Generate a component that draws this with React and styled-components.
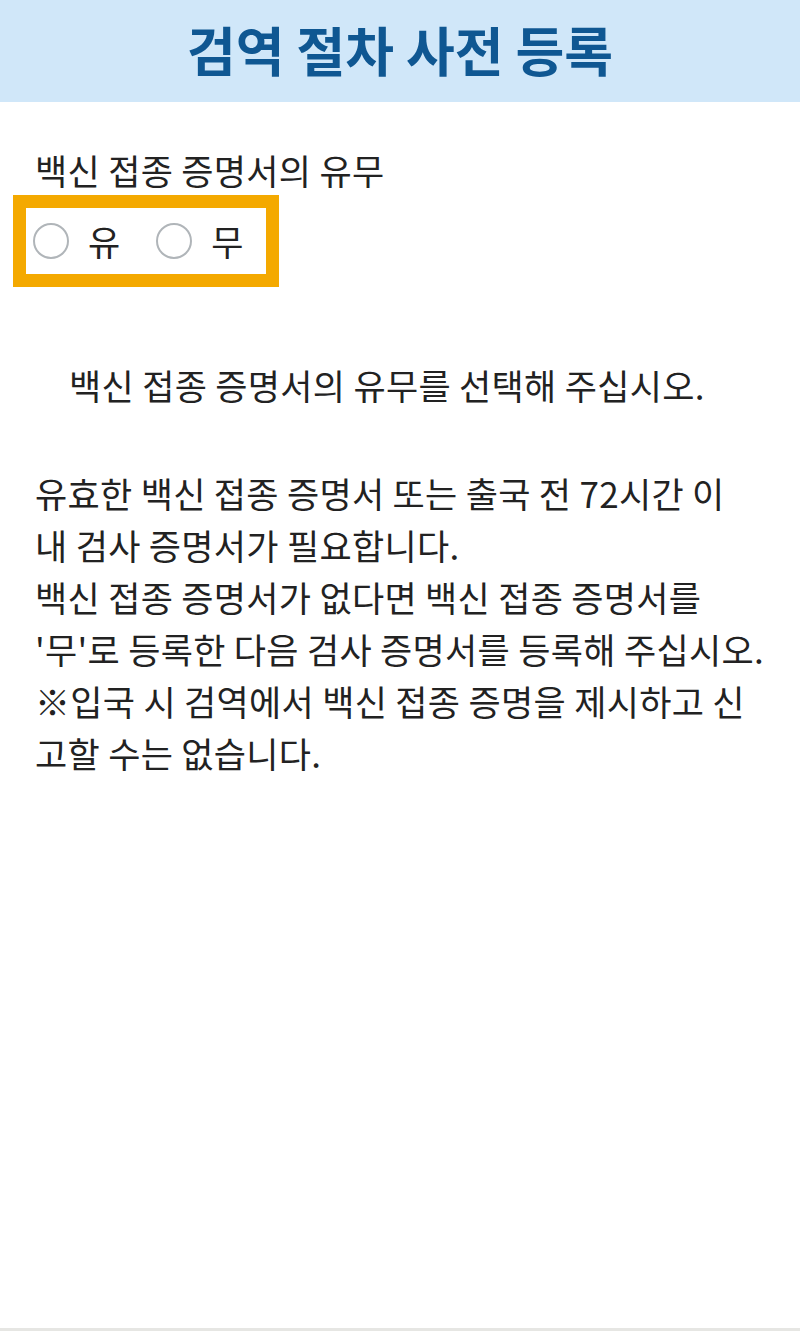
import React from "react";
import styled, { createGlobalStyle } from "styled-components";

const GlobalStyle = createGlobalStyle`
  html, body {
    margin: 0;
    padding: 0;
    background: #ffffff;
  }
  body {
    font-family: "Noto Sans CJK KR", "Noto Sans", sans-serif;
    color: #222222;
  }
`;

const Page = styled.div`
  width: 800px;
  height: 1331px;
  display: flex;
  flex-direction: column;
  box-sizing: border-box;
  border-bottom: 3px solid #e6e6e3;
`;

const Header = styled.header`
  height: 102px;
  background: #d0e7f9;
  display: flex;
  align-items: center;
  justify-content: center;
`;

const Title = styled.h1`
  margin: 0 0 4px;
  font-size: 53px;
  font-weight: 700;
  color: #0f5792;
  line-height: 1;
`;

const Content = styled.main`
  padding: 46px 35px 0;
  display: flex;
  flex-direction: column;
`;

const Label = styled.div`
  font-size: 35px;
  letter-spacing: 0.3px;
  line-height: 44px;
`;

const RadioBox = styled.div`
  margin: 3px 0 0 -22px;
  width: 266px;
  height: 92px;
  box-sizing: border-box;
  border: 13px solid #f4a900;
  display: flex;
  align-items: center;
  padding: 0 0 1px 7px;
  gap: 36px;
`;

const Option = styled.label`
  display: flex;
  align-items: center;
  gap: 19px;
  font-size: 35px;
  color: #222222;
`;

const Circle = styled.span`
  width: 36px;
  height: 36px;
  box-sizing: border-box;
  border: 2px solid #b0b5b9;
  border-radius: 50%;
  background: #ffffff;
`;

const Instruction = styled.p`
  margin: 76px 0 0 34px;
  font-size: 35px;
  letter-spacing: 0.3px;
  line-height: 44px;
`;

const Notes = styled.p`
  margin: 60px 0 0;
  font-size: 35px;
  letter-spacing: 0.3px;
  line-height: 52px;
  white-space: nowrap;
`;

const options = ["유", "무"];

export default function App() {
  return (
    <>
      <GlobalStyle />
      <Page>
        <Header>
          <Title>검역 절차 사전 등록</Title>
        </Header>
        <Content>
          <Label>백신 접종 증명서의 유무</Label>
          <RadioBox>
            {options.map((o) => (
              <Option key={o}>
                <Circle />
                {o}
              </Option>
            ))}
          </RadioBox>
          <Instruction>백신 접종 증명서의 유무를 선택해 주십시오.</Instruction>
          <Notes>
            유효한 백신 접종 증명서 또는 출국 전 72시간 이<br />
            내 검사 증명서가 필요합니다.<br />
            백신 접종 증명서가 없다면 백신 접종 증명서를<br />
            '무'로 등록한 다음 검사 증명서를 등록해 주십시오.<br />
            ※입국 시 검역에서 백신 접종 증명을 제시하고 신<br />
            고할 수는 없습니다.
          </Notes>
        </Content>
      </Page>
    </>
  );
}
